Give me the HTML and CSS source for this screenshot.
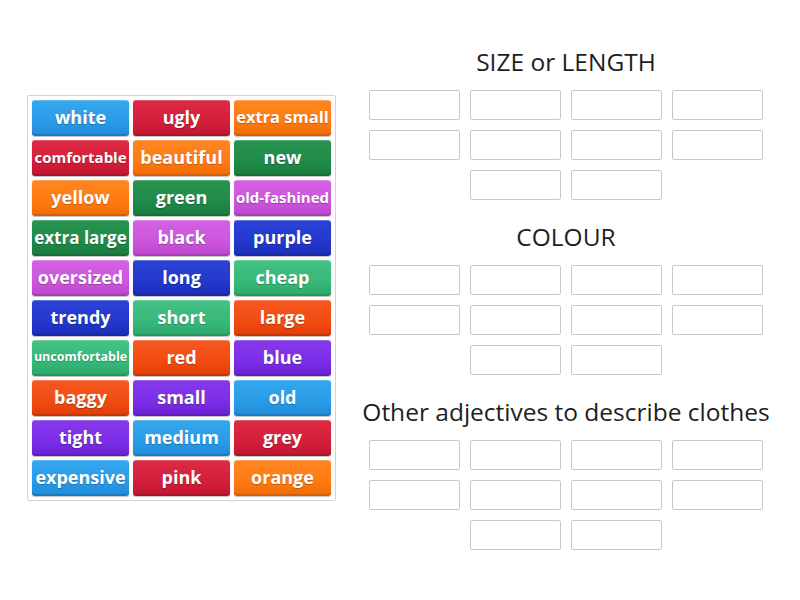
FILE: index.html
```html
<!DOCTYPE html>
<html lang="en">
<head>
<meta charset="utf-8">
<title>Group sort</title>
<link rel="stylesheet" href="styles.css">
</head>
<body>
<div class="page">
  <div class="bank">
    <div class="tile blue"><span>white</span></div>
    <div class="tile red"><span>ugly</span></div>
    <div class="tile orange"><span>extra small</span></div>
    <div class="tile red"><span>comfortable</span></div>
    <div class="tile orange"><span>beautiful</span></div>
    <div class="tile green"><span>new</span></div>
    <div class="tile orange"><span>yellow</span></div>
    <div class="tile green"><span>green</span></div>
    <div class="tile violet"><span>old-fashined</span></div>
    <div class="tile green"><span>extra large</span></div>
    <div class="tile violet"><span>black</span></div>
    <div class="tile navy"><span>purple</span></div>
    <div class="tile violet"><span>oversized</span></div>
    <div class="tile navy"><span>long</span></div>
    <div class="tile teal"><span>cheap</span></div>
    <div class="tile navy"><span>trendy</span></div>
    <div class="tile teal"><span>short</span></div>
    <div class="tile redorange"><span>large</span></div>
    <div class="tile teal"><span>uncomfortable</span></div>
    <div class="tile redorange"><span>red</span></div>
    <div class="tile purple"><span>blue</span></div>
    <div class="tile redorange"><span>baggy</span></div>
    <div class="tile purple"><span>small</span></div>
    <div class="tile blue"><span>old</span></div>
    <div class="tile purple"><span>tight</span></div>
    <div class="tile blue"><span>medium</span></div>
    <div class="tile red"><span>grey</span></div>
    <div class="tile blue"><span>expensive</span></div>
    <div class="tile red"><span>pink</span></div>
    <div class="tile orange"><span>orange</span></div>
  </div>
  <div class="groups">
    <section class="group">
      <h2 class="group-title">SIZE or LENGTH</h2>
      <div class="slots">
        <div class="slot"></div><div class="slot"></div><div class="slot"></div><div class="slot"></div>
        <div class="slot"></div><div class="slot"></div><div class="slot"></div><div class="slot"></div>
        <div class="slot"></div><div class="slot"></div>
      </div>
    </section>
    <section class="group">
      <h2 class="group-title">COLOUR</h2>
      <div class="slots">
        <div class="slot"></div><div class="slot"></div><div class="slot"></div><div class="slot"></div>
        <div class="slot"></div><div class="slot"></div><div class="slot"></div><div class="slot"></div>
        <div class="slot"></div><div class="slot"></div>
      </div>
    </section>
    <section class="group">
      <h2 class="group-title">Other adjectives to describe clothes</h2>
      <div class="slots">
        <div class="slot"></div><div class="slot"></div><div class="slot"></div><div class="slot"></div>
        <div class="slot"></div><div class="slot"></div><div class="slot"></div><div class="slot"></div>
        <div class="slot"></div><div class="slot"></div>
      </div>
    </section>
  </div>
</div>
<script src="fit.js"></script>
</body>
</html>
```

FILE: styles.css
```css
* { box-sizing: border-box; }
html, body { margin: 0; padding: 0; background: #fff; }
body { font-family: "Open Sans", "DejaVu Sans", sans-serif; color: #222; }

.page {
  display: flex;
  align-items: center;
  height: 596px;
  padding-left: 27px;
}

.bank {
  display: grid;
  grid-template-columns: repeat(3, 97px);
  grid-auto-rows: 36px;
  gap: 4px;
  padding: 4px;
  border: 1px solid #d4d4d4;
  border-radius: 2px;
  background: #fff;
}

.tile {
  display: flex;
  align-items: center;
  justify-content: center;
  border-radius: 3px;
  color: #fff;
  font-weight: 700;
  font-size: 18px;
  white-space: nowrap;
  overflow: hidden;
  text-shadow: 0 1px 1px rgba(0,0,0,0.25);
  box-shadow: inset 0 1px 0 rgba(255,255,255,0.25), inset 0 -2px 0 rgba(0,0,0,0.12), 0 1px 1px rgba(0,0,0,0.25);
}
.tile span { display: inline-block; line-height: 1; padding-bottom: 2px; }

.blue      { background: linear-gradient(#35a7ee, #2a9be6 60%, #1f8bd8); }
.red       { background: linear-gradient(#dd2a44, #d41f3a 60%, #c0152e); }
.orange    { background: linear-gradient(#ff8622, #ff7a12 60%, #f06a05); }
.green     { background: linear-gradient(#27944f, #208a49 60%, #187b3e); }
.violet    { background: linear-gradient(#d462e3, #cc55dc 60%, #bb45cc); }
.navy      { background: linear-gradient(#2c43d6, #2338cc 60%, #1b2db8); }
.teal      { background: linear-gradient(#45c186, #38b87b 60%, #2ba86c); }
.redorange { background: linear-gradient(#f65820, #f24b12 60%, #e03c06); }
.purple    { background: linear-gradient(#8539ec, #7b2ee6 60%, #6a20d4); }

.groups {
  width: 420px;
  margin-left: 20px;
  display: flex;
  flex-direction: column;
  gap: 21px;
}

.group { display: flex; flex-direction: column; align-items: center; }

.group-title {
  margin: 0 0 12px;
  font-size: 24.5px;
  font-weight: 400;
  line-height: 32px;
  color: #1e1e1e;
  white-space: nowrap;
}

.slots {
  width: 395px;
  display: flex;
  flex-wrap: wrap;
  justify-content: center;
  column-gap: 10.3px;
  row-gap: 10px;
}

.slot {
  width: 91px;
  height: 30px;
  border: 1px solid #c8c8c8;
  border-radius: 2px;
  background: #fff;
}
```

FILE: fit.js
```js
document.querySelectorAll('.tile span').forEach(function (s) {
  var size = 18;
  while (s.offsetWidth > 93 && size > 9) {
    size -= 0.25;
    s.style.fontSize = size + 'px';
  }
});
```
